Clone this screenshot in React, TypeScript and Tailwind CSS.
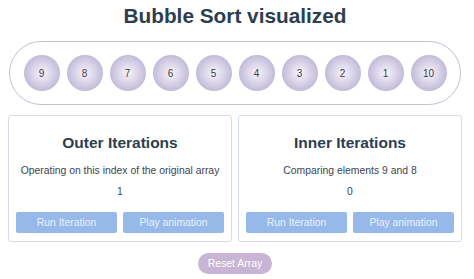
import React from "react";

const nums = [9, 8, 7, 6, 5, 4, 3, 2, 1, 10];

function Card({ title, desc, value }: { title: string; desc: string; value: string }) {
  return (
    <div className="flex-1 flex flex-col items-center border border-[#d3dce8] rounded-[3px] pt-[17px] pb-[8px] px-[7px] bg-white">
      <div className="h-[20px] flex items-center justify-center text-[15.5px] font-bold text-[#2c3e50]">{title}</div>
      <div className="mt-[10px] h-[16px] flex items-center justify-center text-[10.4px] text-[#3d4550]">{desc}</div>
      <div className="mt-[5px] h-[16px] flex items-center justify-center text-[10.4px] text-[#3d4550]">{value}</div>
      <div className="mt-[12px] w-full flex gap-[6px]">
        <button className="flex-1 h-[21px] rounded-[2px] bg-[#97b9e9] text-[#eaf1fb] text-[10.4px] flex items-center justify-center">Run Iteration</button>
        <button className="flex-1 h-[21px] rounded-[2px] bg-[#97b9e9] text-[#eaf1fb] text-[10.4px] flex items-center justify-center">Play animation</button>
      </div>
    </div>
  );
}

export default function App() {
  return (
    <div className="w-[470px] h-[279px] bg-white flex flex-col" style={{ fontFamily: '"Liberation Sans", Arial, sans-serif' }}>
      <div className="h-[32px] flex items-center justify-center text-[20.8px] font-bold text-[#2c3e50]">Bubble Sort visualized</div>
      <div className="mt-[9px] mx-[9px] h-[64px] rounded-full border-[1.5px] border-[#bac4d3] flex items-center justify-center gap-[7px]">
        {nums.map((n) => (
          <div
            key={n}
            className="w-[36px] h-[36px] rounded-full flex items-center justify-center text-[10px] text-[#3a3a48] bg-[radial-gradient(circle,#f8f4fa_0%,#d6d0e6_45%,#a9a3cb_100%)]"
          >
            {n}
          </div>
        ))}
      </div>
      <div className="mt-[10px] px-[8px] flex gap-[6px]">
        <Card title="Outer Iterations" desc="Operating on this index of the original array" value="1" />
        <Card title="Inner Iterations" desc="Comparing elements 9 and 8" value="0" />
      </div>
      <div className="mt-[11px] flex justify-center">
        <button className="w-[74px] h-[21px] rounded-full bg-[#c8b4d4] text-white text-[10.4px] flex items-center justify-center">Reset Array</button>
      </div>
    </div>
  );
}
